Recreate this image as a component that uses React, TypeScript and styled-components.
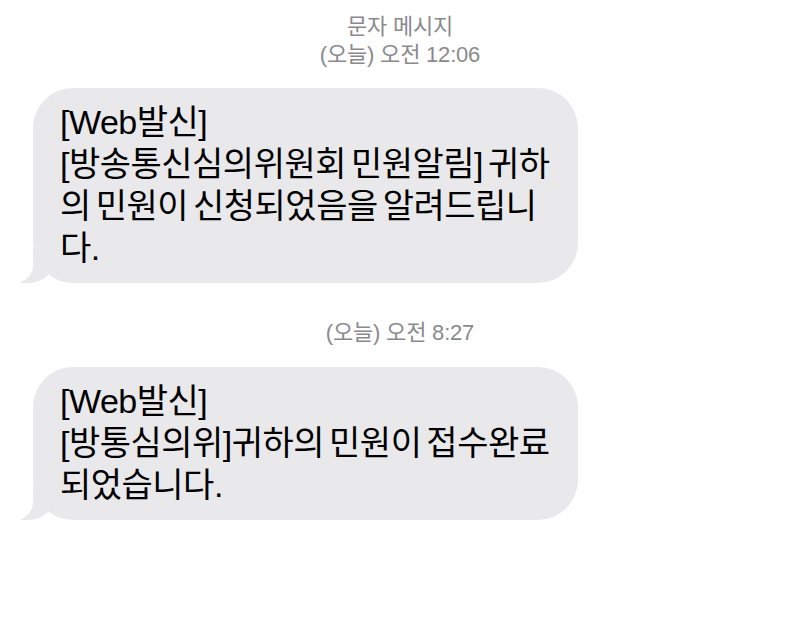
import React from "react";
import styled, { createGlobalStyle } from "styled-components";

const GlobalStyle = createGlobalStyle`
  html, body {
    margin: 0;
    padding: 0;
    background: #ffffff;
  }
  body {
    font-family: "Liberation Sans", "Noto Sans CJK KR", sans-serif;
  }
`;

const Thread = styled.div`
  display: flex;
  flex-direction: column;
  padding: 13px 0 0 33px;
  width: 800px;
  box-sizing: border-box;
`;

const Stamp = styled.div<{ $gap?: number }>`
  margin-top: ${(p) => p.$gap ?? 0}px;
  margin-left: -33px;
  text-align: center;
  color: #8a8a8e;
  font-size: 22px;
  line-height: 28px;
  letter-spacing: -0.2px;
`;

const Bubble = styled.div<{ $gap: number }>`
  position: relative;
  margin-top: ${(p) => p.$gap}px;
  width: 545px;
  box-sizing: border-box;
  padding: 13px 20px 14px 27px;
  background: #e9e9eb;
  border-radius: 40px;
  color: #000000;
  font-size: 34px;
  line-height: 42px;
  letter-spacing: -0.5px;
  word-spacing: -4px;

  &::before {
    content: "";
    position: absolute;
    bottom: 0;
    left: -12px;
    width: 34px;
    height: 34px;
    background: #e9e9eb;
    border-bottom-right-radius: 26px;
  }

  &::after {
    content: "";
    position: absolute;
    bottom: 0;
    left: -34px;
    width: 34px;
    height: 34px;
    background: #ffffff;
    border-bottom-right-radius: 18px;
  }
`;

const Line = styled.div`
  position: relative;
  z-index: 1;
  white-space: nowrap;
`;

const messages = [
  {
    time: "(오늘) 오전 12:06",
    lines: [
      "[Web발신]",
      "[방송통신심의위원회 민원알림] 귀하",
      "의 민원이 신청되었음을 알려드립니",
      "다.",
    ],
  },
  {
    time: "(오늘) 오전 8:27",
    lines: ["[Web발신]", "[방통심의위]귀하의 민원이 접수완료", "되었습니다."],
  },
];

const App = () => {
  return (
    <>
      <GlobalStyle />
      <Thread>
        <Stamp>문자 메시지</Stamp>
        {messages.map((m, i) => (
          <React.Fragment key={m.time}>
            <Stamp $gap={i === 0 ? 0 : 36}>{m.time}</Stamp>
            <Bubble $gap={i === 0 ? 19 : 20}>
              {m.lines.map((l) => (
                <Line key={l}>{l}</Line>
              ))}
            </Bubble>
          </React.Fragment>
        ))}
      </Thread>
    </>
  );
};

export default App;
